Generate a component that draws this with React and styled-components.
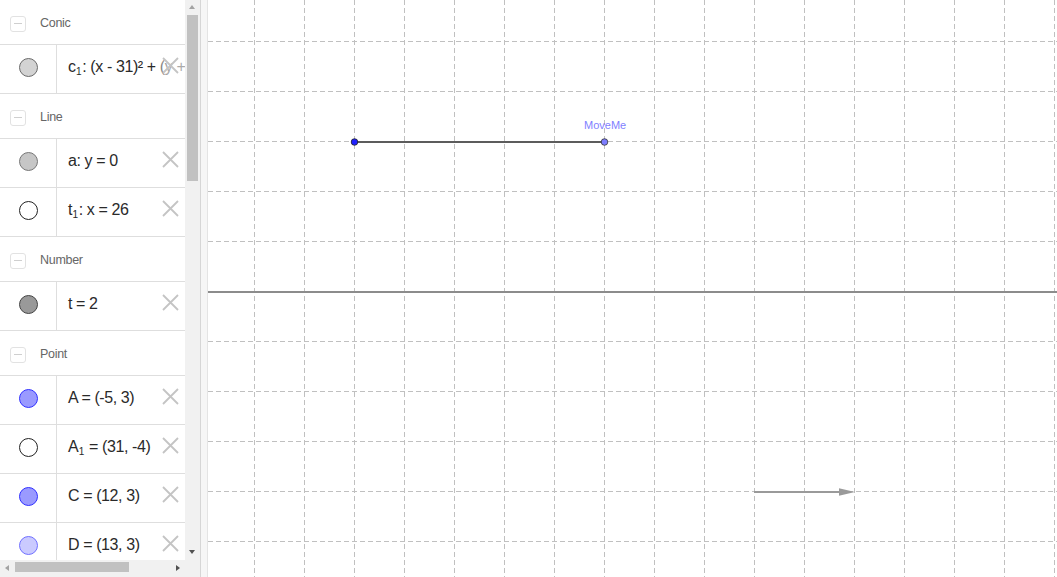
import React from 'react';
import styled, { createGlobalStyle } from 'styled-components';

const GlobalStyle = createGlobalStyle`
  html, body {
    margin: 0;
    padding: 0;
    overflow: hidden;
    background: #fff;
  }
`;

const Layout = styled.div`
  display: flex;
  width: 1057px;
  height: 577px;
  font-family: "Liberation Sans", Arial, sans-serif;
`;

const AlgebraPanel = styled.div`
  width: 200px;
  height: 100%;
  display: flex;
  flex-direction: column;
  flex-shrink: 0;
`;

const AlgebraBody = styled.div`
  flex: 1;
  display: flex;
  min-height: 0;
`;

const List = styled.div`
  width: 185px;
  overflow: hidden;
`;

const Header = styled.div`
  height: 45px;
  display: flex;
  align-items: center;
  padding: 3px 0 0 10px;
  box-sizing: border-box;
  border-bottom: 1px solid #dedede;
  gap: 14px;
`;

const Toggle = styled.span`
  width: 16px;
  height: 16px;
  box-sizing: border-box;
  border: 1px solid #e2e2e2;
  border-radius: 3px;
  display: flex;
  align-items: center;
  justify-content: center;
  &::after {
    content: "";
    width: 8px;
    height: 1.5px;
    background: #cfcfcf;
  }
`;

const HeaderTitle = styled.span`
  font-size: 12.5px;
  letter-spacing: -0.3px;
  color: #666;
  margin-top: -2px;
`;

const Row = styled.div`
  position: relative;
  height: 49px;
  box-sizing: border-box;
  display: flex;
  border-bottom: 1px solid #dedede;
`;

const MarbleCell = styled.div`
  width: 57px;
  flex-shrink: 0;
  box-sizing: border-box;
  border-right: 1px solid #dedede;
  display: flex;
  align-items: center;
  justify-content: center;
`;

const Marble = styled.span`
  width: 19px;
  height: 19px;
  margin-top: -3px;
  box-sizing: border-box;
  border-radius: 50%;
  border: 1px solid ${p => p.$stroke};
  background: ${p => p.$fill};
`;

const Formula = styled.div`
  flex: 1;
  padding-left: 11px;
  white-space: nowrap;
  overflow: hidden;
  font-size: 16px;
  letter-spacing: -0.4px;
  line-height: 44px;
  color: #2a2a2a;
`;

const Sub = styled.sub`
  font-size: 10px;
  vertical-align: -3px;
  line-height: 0;
  margin: 0 1px 0 0.5px;
`;

const DeleteButton = styled.div`
  position: absolute;
  right: 0;
  top: 0;
  bottom: 0;
  width: 30px;
  display: flex;
  justify-content: center;
  padding-top: 12px;
  box-sizing: border-box;
  background: linear-gradient(to right, rgba(255,255,255,0.2), rgba(255,255,255,0.6) 40%);
`;

const VScroll = styled.div`
  width: 15px;
  background: #f1f1f1;
  position: relative;
`;

const VThumb = styled.div`
  position: absolute;
  left: 2px;
  top: 15px;
  width: 11px;
  height: 166px;
  background: #c1c1c1;
`;

const Arrow = styled.span`
  position: absolute;
  width: 0;
  height: 0;
  border-style: solid;
  ${p => p.$dir === 'up' && `
    top: 5px; left: 4px;
    border-width: 0 3.5px 4px 3.5px;
    border-color: transparent transparent ${p.$color} transparent;
  `}
  ${p => p.$dir === 'down' && `
    bottom: 6px; left: 4px;
    border-width: 4px 3.5px 0 3.5px;
    border-color: ${p.$color} transparent transparent transparent;
  `}
  ${p => p.$dir === 'left' && `
    left: 5px; top: 5px;
    border-width: 3.5px 4px 3.5px 0;
    border-color: transparent ${p.$color} transparent transparent;
  `}
  ${p => p.$dir === 'right' && `
    left: 176px; top: 5px;
    border-width: 3.5px 0 3.5px 4px;
    border-color: transparent transparent transparent ${p.$color};
  `}
`;

const HScroll = styled.div`
  height: 17px;
  background: #f1f1f1;
  position: relative;
`;

const HThumb = styled.div`
  position: absolute;
  left: 15px;
  top: 2px;
  width: 114px;
  height: 10px;
  background: #c1c1c1;
`;

const Divider = styled.div`
  width: 8px;
  flex-shrink: 0;
  box-sizing: border-box;
  background: #f6f6f6;
  border-left: 1px solid #d6d6d6;
  border-right: 1px solid #e4e4e4;
`;

const Graphics = styled.div`
  flex: 1;
  position: relative;
  background: #fff;
  svg { display: block; }
`;

const CloseIcon = () => (
  <svg width="17" height="17" viewBox="0 0 17 17">
    <path d="M1 1 L16 16 M16 1 L1 16" stroke="#c4c4c4" strokeWidth="1.8" fill="none" />
  </svg>
);

const sections = [
  {
    title: 'Conic',
    items: [
      { label: <>c<Sub>1</Sub>: (x - 31)² + (y + 4)² = 25</>, fill: '#d3d3d3', stroke: '#6a6a6a' }
    ]
  },
  {
    title: 'Line',
    items: [
      { label: 'a: y = 0', fill: '#c6c6c6', stroke: '#777' },
      { label: <>t<Sub>1</Sub>: x = 26</>, fill: '#fff', stroke: '#222' }
    ]
  },
  {
    title: 'Number',
    items: [{ label: 't = 2', fill: '#999', stroke: '#444' }]
  },
  {
    title: 'Point',
    items: [
      { label: 'A = (-5, 3)', fill: '#9a9aff', stroke: '#3030ff' },
      { label: <>A<Sub>1</Sub> = (31, -4)</>, fill: '#fff', stroke: '#222' },
      { label: 'C = (12, 3)', fill: '#9a9aff', stroke: '#3030ff' },
      { label: 'D = (13, 3)', fill: '#cacaff', stroke: '#7070ff' }
    ]
  }
];

const W = 849;
const H = 577;
const gridX = Array.from({ length: 17 }, (_, i) => 46.5 + i * 50);
const gridY = Array.from({ length: 11 }, (_, i) => 41.5 + i * 50).filter(y => y !== 291.5);

const Canvas = () => (
  <svg width={W} height={H}>
    {gridX.map(x => (
      <line key={'v' + x} x1={x} y1={0} x2={x} y2={H} stroke="#c0c0c0" strokeWidth="1" strokeDasharray="5 3" />
    ))}
    {gridY.map(y => (
      <line key={'h' + y} x1={0} y1={y} x2={W} y2={y} stroke="#c0c0c0" strokeWidth="1" strokeDasharray="5 3" />
    ))}
    <line x1={0} y1={292} x2={W} y2={292} stroke="#8c8c8c" strokeWidth="2" />
    <line x1={146.5} y1={142} x2={396.5} y2={142} stroke="#5c5c5c" strokeWidth="2" />
    <circle cx={146.5} cy={142} r={3.3} fill="#2020ff" stroke="#222" strokeWidth="0.8" />
    <circle cx={396.5} cy={142} r={3.3} fill="#7d7dff" stroke="#333" strokeWidth="0.8" />
    <text x={376} y={129} fontFamily="Liberation Sans, Arial, sans-serif" fontSize="11" fill="#7f7fff">MoveMe</text>
    <line x1={546} y1={492} x2={634} y2={492} stroke="#9a9a9a" strokeWidth="2" />
    <path d="M631 488.3 L647 492 L631 495.7 Z" fill="#9a9a9a" />
  </svg>
);

export default function App() {
  return (
    <>
      <GlobalStyle />
      <Layout>
        <AlgebraPanel>
          <AlgebraBody>
            <List>
              {sections.map(section => (
                <React.Fragment key={section.title}>
                  <Header>
                    <Toggle />
                    <HeaderTitle>{section.title}</HeaderTitle>
                  </Header>
                  {section.items.map((item, i) => (
                    <Row key={i}>
                      <MarbleCell>
                        <Marble $fill={item.fill} $stroke={item.stroke} />
                      </MarbleCell>
                      <Formula>{item.label}</Formula>
                      <DeleteButton>
                        <CloseIcon />
                      </DeleteButton>
                    </Row>
                  ))}
                </React.Fragment>
              ))}
            </List>
            <VScroll>
              <Arrow $dir="up" $color="#a3a3a3" />
              <VThumb />
              <Arrow $dir="down" $color="#505050" />
            </VScroll>
          </AlgebraBody>
          <HScroll>
            <Arrow $dir="left" $color="#a3a3a3" />
            <HThumb />
            <Arrow $dir="right" $color="#505050" />
          </HScroll>
        </AlgebraPanel>
        <Divider />
        <Graphics>
          <Canvas />
        </Graphics>
      </Layout>
    </>
  );
}
